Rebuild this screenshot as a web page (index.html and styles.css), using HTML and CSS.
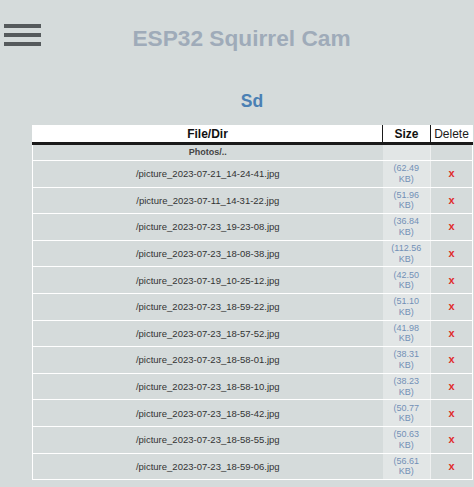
FILE: index.html
```html
<!DOCTYPE html>
<html>
<head>
<meta charset="utf-8">
<link rel="stylesheet" href="styles.css">
</head>
<body>
<header class="top">
  <div class="burger"><span></span><span></span><span></span></div>
  <h1 class="title">ESP32 Squirrel Cam</h1>
</header>
<main class="main">
  <h2 class="sd">Sd</h2>
  <table class="files">
    <colgroup><col class="c-name"><col class="c-size"><col class="c-del"></colgroup>
    <thead>
      <tr><th>File/Dir</th><th>Size</th><th class="th-del">Delete</th></tr>
    </thead>
    <tbody>
      <tr class="dir"><td class="name">Photos/..</td><td class="size"></td><td class="del"></td></tr>
      <tr><td class="name">/picture_2023-07-21_14-24-41.jpg</td><td class="size">(62.49<br>KB)</td><td class="del">x</td></tr>
      <tr><td class="name">/picture_2023-07-11_14-31-22.jpg</td><td class="size">(51.96<br>KB)</td><td class="del">x</td></tr>
      <tr><td class="name">/picture_2023-07-23_19-23-08.jpg</td><td class="size">(36.84<br>KB)</td><td class="del">x</td></tr>
      <tr><td class="name">/picture_2023-07-23_18-08-38.jpg</td><td class="size">(112.56<br>KB)</td><td class="del">x</td></tr>
      <tr><td class="name">/picture_2023-07-19_10-25-12.jpg</td><td class="size">(42.50<br>KB)</td><td class="del">x</td></tr>
      <tr><td class="name">/picture_2023-07-23_18-59-22.jpg</td><td class="size">(51.10<br>KB)</td><td class="del">x</td></tr>
      <tr><td class="name">/picture_2023-07-23_18-57-52.jpg</td><td class="size">(41.98<br>KB)</td><td class="del">x</td></tr>
      <tr><td class="name">/picture_2023-07-23_18-58-01.jpg</td><td class="size">(38.31<br>KB)</td><td class="del">x</td></tr>
      <tr><td class="name">/picture_2023-07-23_18-58-10.jpg</td><td class="size">(38.23<br>KB)</td><td class="del">x</td></tr>
      <tr><td class="name">/picture_2023-07-23_18-58-42.jpg</td><td class="size">(50.77<br>KB)</td><td class="del">x</td></tr>
      <tr><td class="name">/picture_2023-07-23_18-58-55.jpg</td><td class="size">(50.63<br>KB)</td><td class="del">x</td></tr>
      <tr><td class="name">/picture_2023-07-23_18-59-06.jpg</td><td class="size">(56.61<br>KB)</td><td class="del">x</td></tr>
    </tbody>
  </table>
</main>
</body>
</html>
```
FILE: styles.css
```css
html, body {
  margin: 0;
  padding: 0;
}
body {
  background: #d5dbdb;
  font-family: "Liberation Sans", Arial, sans-serif;
  color: #222;
  width: 474px;
  height: 487px;
  overflow: hidden;
}
.top {
  display: flex;
  align-items: flex-start;
  padding: 24px 0 0 4px;
}
.burger {
  display: flex;
  flex-direction: column;
  gap: 5px;
  width: 37px;
}
.burger span {
  display: block;
  height: 4px;
  background: #555a5c;
}
.title {
  flex: 1;
  margin: 1px 32px 0 0;
  text-align: center;
  font-size: 22.7px;
  line-height: 26px;
  font-weight: bold;
  color: #9fabb9;
}
.main {
  padding: 0 2px 0 32px;
}
.sd {
  margin: 40px 0 0;
  text-align: center;
  font-size: 17.5px;
  line-height: 20px;
  font-weight: bold;
  color: #4b80b4;
}
.files {
  margin-top: 14px;
  width: 440px;
  table-layout: fixed;
  border-collapse: collapse;
  border: 1px solid #ffffff;
}
.c-name { width: 350px; }
.c-size { width: 48px; }
.c-del { width: 42px; }
.files th {
  background: #ffffff;
  font-size: 12px;
  line-height: 14px;
  font-weight: bold;
  color: #111;
  padding: 1px 0;
  border-bottom: 3px solid #1a1a1a;
  border-left: 1px solid #1a1a1a;
}
.files th:first-child {
  border-left: none;
}
.files th.th-del {
  font-weight: normal;
  color: #1a1a1a;
}
.files td {
  border-bottom: 1px solid #ffffff;
  text-align: center;
  vertical-align: middle;
  padding: 2.3px 0;
}
.name {
  font-size: 9.5px;
  line-height: 11px;
  color: #333;
}
.size {
  background: #e2e6e6;
  font-size: 9px;
  line-height: 10.5px;
  color: #7290b6;
}
.del {
  font-size: 11px;
  line-height: 11px;
  font-weight: bold;
  color: #e02a2a;
  border-left: 1px solid #eef0f0;
}
.dir td {
  padding: 2px 0;
}
.dir .name {
  font-size: 9px;
  font-weight: bold;
  line-height: 11px;
  color: #444;
}
```
